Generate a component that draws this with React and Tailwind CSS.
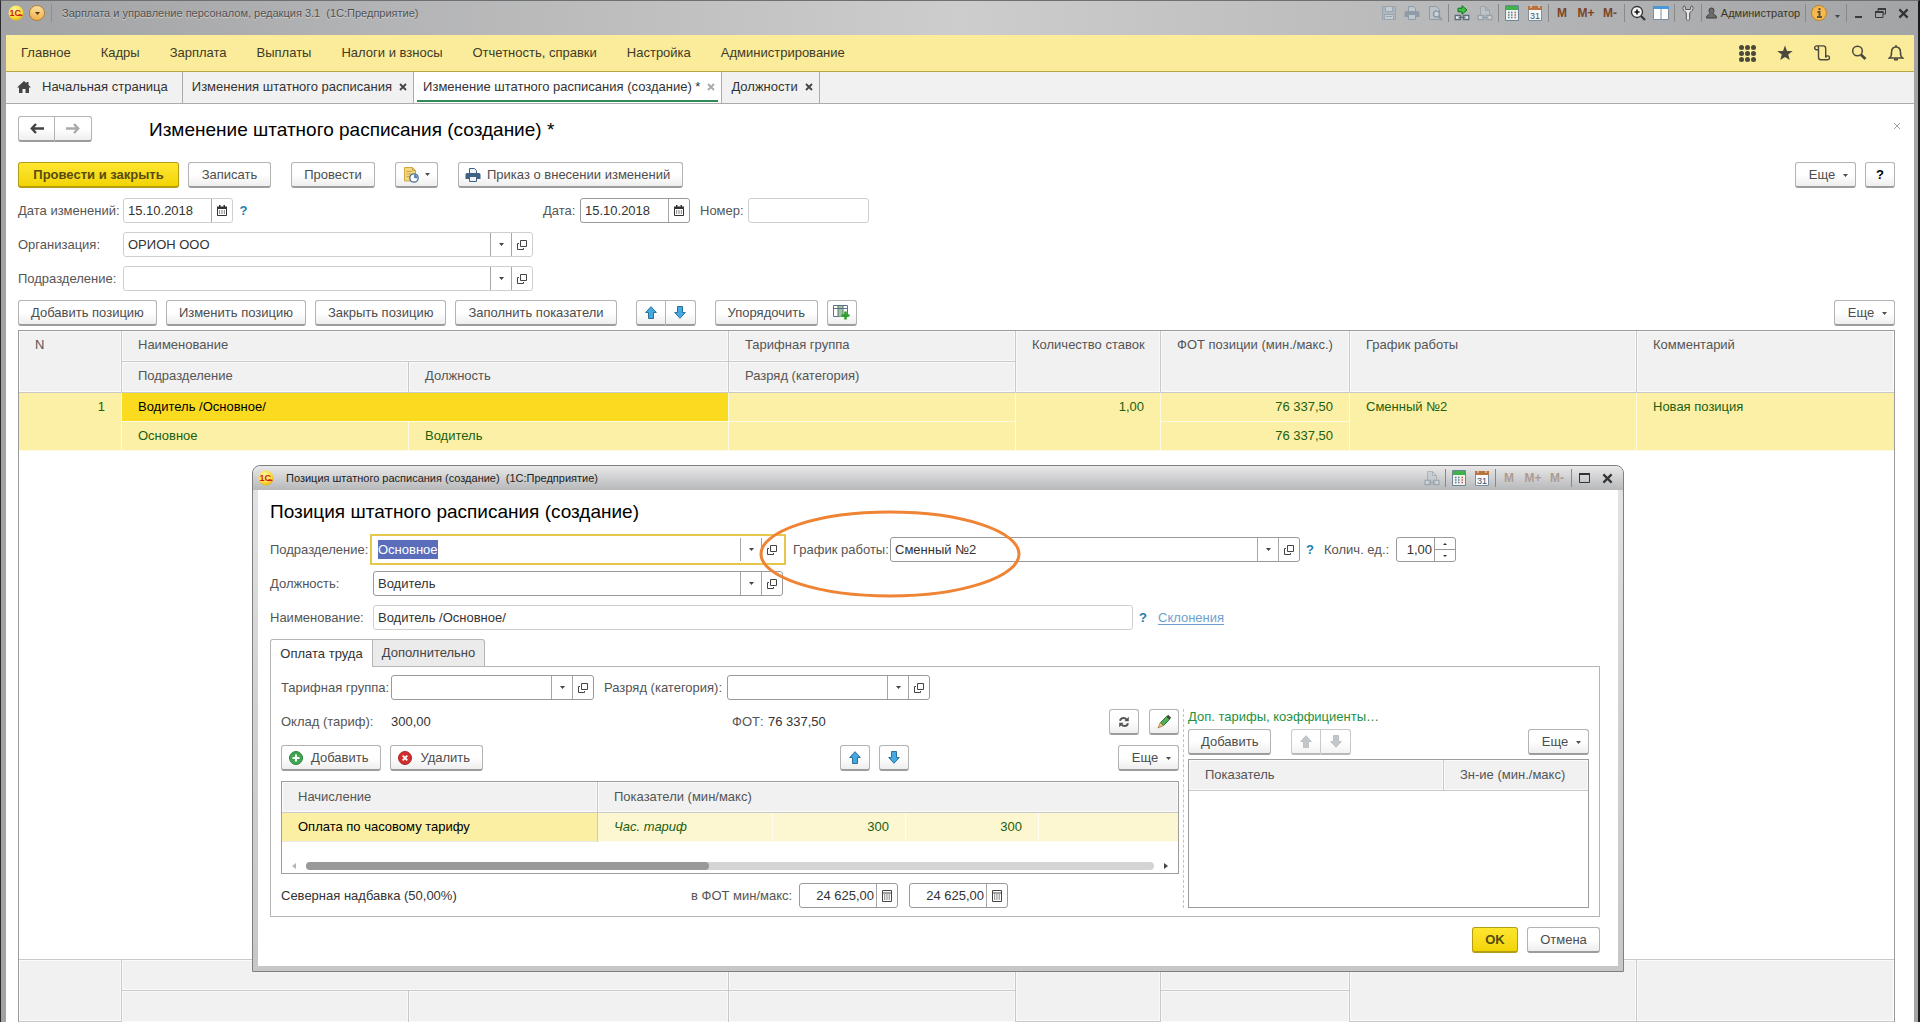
import { useEffect, useRef } from 'react'
import clsx from 'clsx'

const MENU = [
  'Главное',
  'Кадры',
  'Зарплата',
  'Выплаты',
  'Налоги и взносы',
  'Отчетность, справки',
  'Настройка',
  'Администрирование',
]

/* ---------- icons ---------- */

function Logo() {
  return (
    <svg width="16" height="16" viewBox="0 0 16 16" className="shrink-0">
      <defs>
        <radialGradient id="logo" cx="0.4" cy="0.3" r="0.8">
          <stop offset="0" stopColor="#fff7a0" />
          <stop offset="0.6" stopColor="#fbdc3c" />
          <stop offset="1" stopColor="#e0a418" />
        </radialGradient>
      </defs>
      <circle cx="8" cy="8" r="7.5" fill="url(#logo)" />
      <text x="1.500" y="11" fontSize="9" fontWeight="bold" fill="#cc1f1a" fontFamily="Liberation Sans, sans-serif">1С</text>
      <path d="M10 10.300h4.500" stroke="#cc1f1a" strokeWidth="1.300" />
    </svg>
  )
}

function SaveIcon() {
  return (
    <svg width="16" height="16" viewBox="0 0 16 16" fill="none" stroke="#93a2ae" opacity="0.85">
      <path d="M1.500 1.500h13v13h-13z" fill="#aab6bf" />
      <path d="M4.500 1.500h7v5h-7zM3.500 9.500h9v5h-9zM5 11.500h6" fill="#c9cfd4" />
    </svg>
  )
}

function PrintIcon({ className = 'text-[#8f9ba6]', paper = '#c0c6cb' }) {
  return (
    <svg width="16" height="16" viewBox="0 0 16 16" className={className}>
      <path d="M4.500 1.500h5l2 2v3h-7z" fill={paper} stroke="currentColor" />
      <path d="M2 6h12a1.500 1.500 0 0 1 1.500 1.500V12H.5V7.500A1.500 1.500 0 0 1 2 6z" fill="currentColor" />
      <path d="M4.500 9.500h7v5h-7z" fill={paper} stroke="currentColor" />
    </svg>
  )
}

function PreviewIcon() {
  return (
    <svg width="16" height="16" viewBox="0 0 16 16" fill="none" stroke="#8c9aa5">
      <path d="M2.500 1.500h7l3 3v10h-10z" fill="#bcc3c9" />
      <circle cx="9.500" cy="9" r="3" strokeWidth="1.500" fill="#ccd3d8" />
      <path d="m11.500 11.500 3.500 3.500" strokeWidth="2" />
    </svg>
  )
}

function LinkBase({ color }) {
  return (
    <path
      d="M6.500 10.500H1.200v4h5.300zM14.800 10.500H9.500v4h5.300zM4.500 12.500h7"
      fill="#eef1f3"
      stroke={color}
      strokeWidth="1.300"
    />
  )
}

function LinkGoIcon() {
  return (
    <svg width="16" height="16" viewBox="0 0 16 16">
      <LinkBase color="#5d6d79" />
      <path d="M4 3.200h4V.7l5 4.300-5 4.300V6.800H4z" fill="#3cc440" stroke="#12701a" />
    </svg>
  )
}

function LinkDocIcon() {
  return (
    <svg width="16" height="16" viewBox="0 0 16 16" opacity="0.6">
      <path d="M3.500 10V1.500h5l4 4V10M8.500 1.500v4h4" fill="#c4cad0" stroke="#8c9aa6" />
      <LinkBase color="#8494a0" />
    </svg>
  )
}

function CalcIcon() {
  return (
    <svg width="14" height="16" viewBox="0 0 14 16">
      <path d="M.5.5h13v15H.5z" fill="#eef3f2" stroke="#6f8494" />
      <path d="M1 1h12v4H1z" fill="#3fb24c" />
      <path d="M3 7.500h1.500M6 7.500h1.500M3 10h1.500M6 10h1.500M3 12.500h1.500M6 12.500h1.500" stroke="#61798c" strokeWidth="1.500" />
      <path d="M9.500 7.500H11M9.500 10H11M9.500 12.500H11" stroke="#c8564c" strokeWidth="1.500" />
    </svg>
  )
}

function DayIcon() {
  return (
    <svg width="14" height="16" viewBox="0 0 14 16">
      <path d="M.5 1.500h13v14H.5z" fill="#f7f9fb" stroke="#7a8fa3" />
      <path d="M0 1h14v4H0z" fill="#b9733f" />
      <path d="M3 0v3M11 0v3" stroke="#f5e3d3" />
      <text x="7" y="13.500" textAnchor="middle" fontSize="9" fill="#3e5368" fontFamily="Liberation Sans, sans-serif">31</text>
    </svg>
  )
}

function ZoomInIcon() {
  return (
    <svg width="16" height="16" viewBox="0 0 16 16" fill="none" stroke="#333">
      <circle cx="7" cy="7" r="5.500" fill="#f4f4f4" strokeWidth="1.300" />
      <path d="M7 4.500v5M4.500 7h5" stroke="#111" strokeWidth="1.600" />
      <path d="m11 11 4 4" strokeWidth="2.200" />
    </svg>
  )
}

function PanelsIcon() {
  return (
    <svg width="16" height="16" viewBox="0 0 16 16">
      <path d="M.5 1.500h15v13H.5z" fill="#fff" stroke="#7d8c9a" />
      <path d="M0 1h16v3H0z" fill="#4a97dc" />
      <path d="M8 4v10" stroke="#7d8c9a" />
    </svg>
  )
}

function WrenchIcon() {
  return (
    <svg width="16" height="16" viewBox="0 0 16 16">
      <path
        d="M4 .8C2.500 2 2.600 5 4.500 6.300L6.300 7.500v6.300c0 2 3.400 2 3.400 0V7.500l1.800-1.200C13.400 5 13.500 2 12 .8L10.700 1.600v2.900H5.300V1.600z"
        fill="#e6e6e6"
        stroke="#555"
      />
    </svg>
  )
}

function UserIcon() {
  return (
    <svg width="11" height="12" viewBox="0 0 11 12">
      <path d="M3 3.500a2.500 2.500 0 0 1 5 0C8 5 7 6 7 6.500c0 1 3.500 1 3.500 4.500H.5c0-3.500 3.500-3.500 3.500-4.500C4 6 3 5 3 3.500z" fill="#6d6d6d" stroke="#3c3c3c" />
    </svg>
  )
}

function Caret({ className }) {
  return (
    <svg width="5" height="3" viewBox="0 0 5 3" className={clsx('shrink-0', className)}>
      <path d="M0 0h5L2.500 3z" fill="currentColor" />
    </svg>
  )
}

function OpenIcon() {
  return (
    <svg width="10" height="10" viewBox="0 0 10 10" fill="none" stroke="#444" strokeWidth="1">
      <path d="M3.500.5h6v6h-6zM2 3.500H.5v6h6V8" />
    </svg>
  )
}

function CalendarIcon() {
  return (
    <svg width="10" height="11" viewBox="0 0 10 11">
      <path d="M.5 2.500h9v8h-9z" fill="#fff" stroke="#333" />
      <path d="M0 1.500h10v2.500H0zM2 0h1.500v2H2zM6.500 0H8v2H6.500z" fill="#333" />
      <path d="M2 6h6M2 8h6" stroke="#333" strokeDasharray="1.200 1.200" />
    </svg>
  )
}

function KeypadIcon() {
  return (
    <svg width="10" height="12" viewBox="0 0 10 12">
      <path d="M.5.5h9v11h-9zM.5 3h9" fill="#fff" stroke="#444" />
      <path d="M2 5h6M2 7h6M2 9h6" stroke="#444" strokeDasharray="1.300 1" />
    </svg>
  )
}

function UpIcon({ disabled }) {
  return (
    <svg width="12" height="13" viewBox="0 0 12 13">
      <path d="M6 .7 11.300 6.500H8.500v6h-5v-6H.7z" fill={disabled ? '#a9b0b5' : '#45a9e0'} stroke={disabled ? '#a0a6ab' : '#2a6f9c'} />
    </svg>
  )
}

function DownIcon({ disabled }) {
  return (
    <svg width="12" height="13" viewBox="0 0 12 13">
      <path d="M6 12.300.7 6.500h2.800v-6h5v6h2.800z" fill={disabled ? '#a9b0b5' : '#45a9e0'} stroke={disabled ? '#a0a6ab' : '#2a6f9c'} />
    </svg>
  )
}

function ReportIcon() {
  return (
    <svg width="16" height="16" viewBox="0 0 16 16">
      <path d="M1.500.5h8l3 3v10.500h-11z" fill="#f3d77c" stroke="#cfa845" />
      <path d="M9.500.5v3h3M3.500 4.500h5M3.500 7h5M3.500 9.500h3" fill="none" stroke="#c9a24a" />
      <circle cx="11" cy="11" r="4.200" fill="#fff" stroke="#4a6e92" strokeWidth="1.300" />
      <path d="M11 11V7.500a3.500 3.500 0 0 1 3.300 4z" fill="#5b87b5" />
    </svg>
  )
}

function AddColumnIcon() {
  return (
    <svg width="17" height="15" viewBox="0 0 17 15">
      <path d="M.5.5h14v11H.5z" fill="#fff" stroke="#5d7382" />
      <path d="M5 1h5v10.500H5z" fill="#9bc79a" />
      <path d="M1 3.500h13M5 1v11M10 1v11" stroke="#5d7382" />
      <path d="M12.500 6.500v8M8.500 10.500h8" stroke="#2e9f2c" strokeWidth="2.600" />
    </svg>
  )
}

function PlusCircle() {
  return (
    <svg width="14" height="14" viewBox="0 0 14 14">
      <circle cx="7" cy="7" r="6.500" fill="#3fa650" stroke="#2f8540" />
      <path d="M7 3.500v7M3.500 7h7" stroke="#fff" strokeWidth="2" />
    </svg>
  )
}

function CrossCircle() {
  return (
    <svg width="14" height="14" viewBox="0 0 14 14">
      <circle cx="7" cy="7" r="6.500" fill="#cf2f2f" stroke="#a92323" />
      <path d="m4.700 4.700 4.600 4.600M9.300 4.700 4.700 9.300" stroke="#fff" strokeWidth="1.800" />
    </svg>
  )
}

function RefreshIcon() {
  return (
    <svg width="12" height="12" viewBox="0 0 12 12" fill="none" stroke="#555" strokeWidth="2">
      <path d="M2 4.800C2.500 2.800 4 2 5.500 2c1.300 0 2.300.5 3.200 1.600M10 7.200C9.500 9.200 8 10 6.500 10c-1.300 0-2.300-.5-3.200-1.600" />
      <path d="M10.800.8v4.500H6.300zM1.200 11.200V6.700h4.500z" fill="#555" stroke="none" />
    </svg>
  )
}

function PencilIcon() {
  return (
    <svg width="15" height="15" viewBox="0 0 15 15">
      <path d="m3.500 8.500 6-6 3 3-6 6z" fill="#4fae57" stroke="#2f7d38" />
      <path d="m9.500 2.500 1.700-1.700 3 3-1.700 1.700z" fill="#444" />
      <path d="m3.300 8.700 3 3L1 14z" fill="#f0c88a" stroke="#8f6a35" strokeWidth="0.700" />
    </svg>
  )
}

function HomeIcon() {
  return (
    <svg width="14" height="12" viewBox="0 0 14 12">
      <path d="M7 0 0 6.500h2V12h3.500V8h3v4H12V6.500h2L11.500 4V1h-2v1.300z" fill="#444" />
    </svg>
  )
}

function CrossIcon({ size = 8, className, width = 2 }) {
  return (
    <svg width={size} height={size} viewBox="0 0 8 8" className={className}>
      <path d="m1 1 6 6M7 1 1 7" stroke="currentColor" strokeWidth={width} />
    </svg>
  )
}

/* ---------- controls ---------- */

function Btn({ children, className, primary, label, disabled }) {
  return (
    <button
      type="button"
      aria-label={label}
      disabled={disabled}
      className={clsx(
        'flex h-[26px] shrink-0 items-center justify-center rounded-[3px] border border-b-2 whitespace-nowrap',
        primary
          ? 'border-[#b39d12] bg-linear-to-b from-[#ffe72e] to-[#f2d400] font-bold text-[#574c0c]'
          : 'border-[#b3b3b3] border-b-[#9c9c9c] bg-linear-to-b from-white from-50% to-[#eeeeee] text-[#4d4d4d]',
        className,
      )}
    >
      {children}
    </button>
  )
}

function MoreBtn() {
  return (
    <Btn className="w-[61px] gap-2 pl-1.5">
      Еще <Caret className="mt-0.5" />
    </Btn>
  )
}

function MoveButtons({ disabled }) {
  return (
    <div className="flex">
      <Btn label="Вверх" disabled={disabled} className={clsx('w-[30px] rounded-r-none', disabled && 'opacity-70')}>
        <UpIcon disabled={disabled} />
      </Btn>
      <Btn label="Вниз" disabled={disabled} className={clsx('w-[30px] rounded-l-none border-l-0', disabled && 'opacity-70')}>
        <DownIcon disabled={disabled} />
      </Btn>
    </div>
  )
}

const BUTTON_ICONS = {
  list: { label: 'Выбрать', icon: <Caret className="text-[#444]" /> },
  open: { label: 'Открыть', icon: <OpenIcon /> },
  date: { label: 'Календарь', icon: <CalendarIcon /> },
  calc: { label: 'Калькулятор', icon: <KeypadIcon /> },
}

function Field({ id, value = '', buttons = [], light, active, right, className, inputRef }) {
  return (
    <div
      className={clsx(
        'flex h-[25px] border bg-white',
        light && 'rounded-[3px] border-[#cfcfcf]',
        active && 'border-white outline-2 outline-offset-1 outline-[#e6c74b]',
        !light && !active && 'rounded-[3px] border-[#9a9a9a]',
        className,
      )}
    >
      <input
        id={id}
        ref={inputRef}
        defaultValue={value}
        className={clsx(
          'w-full min-w-0 bg-transparent outline-none selection:bg-[#5a6dbb] selection:text-white',
          right ? 'pr-0.5 text-right' : 'px-1',
        )}
      />
      {buttons.map((b) => (
        <button
          key={b}
          type="button"
          aria-label={BUTTON_ICONS[b].label}
          className="flex w-[21px] shrink-0 items-center justify-center border-l border-[#a6a6a6]"
        >
          {BUTTON_ICONS[b].icon}
        </button>
      ))}
    </div>
  )
}

function Label({ htmlFor, children, className }) {
  return (
    <label htmlFor={htmlFor} className={clsx('shrink-0 whitespace-nowrap text-[#555]', className)}>
      {children}
    </label>
  )
}

function Help({ className }) {
  return (
    <button type="button" className={clsx('font-bold text-[#2080ad]', className)}>
      ?
    </button>
  )
}

/* ---------- window chrome ---------- */

function BarIcon({ children, label, className = 'w-[23px]' }) {
  return (
    <button type="button" aria-label={label} className={clsx('flex h-5 shrink-0 items-center justify-center', className)}>
      {children}
    </button>
  )
}

function BarSep() {
  return (
    <span className="flex h-[18px] w-1 shrink-0 justify-center">
      <span className="w-px bg-[#88898b]" />
    </span>
  )
}

function MemoryButtons({ className }) {
  return (
    <div className={clsx('flex text-[12px] font-bold', className)}>
      <BarIcon className="w-6">M</BarIcon>
      <BarIcon className="w-6">M+</BarIcon>
      <BarIcon className="w-6">M-</BarIcon>
    </div>
  )
}

function TitleBar() {
  return (
    <header className="flex h-[34px] shrink-0 items-start pt-0.5 text-[11px]">
      <div className="flex h-5 items-center">
        <span className="flex w-[19px] justify-center">
          <Logo />
        </span>
        <button type="button" aria-label="Меню" className="ml-1 flex size-4 items-center justify-center rounded-full border border-[#b5803a] bg-linear-to-b from-[#fbdf9c] to-[#f0b049] text-[#4b3a1c]">
          <Caret />
        </button>
        <span className="ml-1.5 h-[18px] w-px bg-[#8d8e90]" />
        <span className="ml-2.5 whitespace-pre text-[#505050] text-shadow-[0_1px_1px_#d8d8d8]">
          {'Зарплата и управление персоналом, редакция 3.1  (1С:Предприятие)'}
        </span>
      </div>
      <div className="ml-auto flex items-center">
        <BarIcon label="Сохранить"><SaveIcon /></BarIcon>
        <BarIcon label="Печать"><PrintIcon /></BarIcon>
        <BarIcon label="Просмотр"><PreviewIcon /></BarIcon>
        <BarSep />
        <BarIcon label="Перейти по ссылке"><LinkGoIcon /></BarIcon>
        <BarIcon label="Получить ссылку"><LinkDocIcon /></BarIcon>
        <BarSep />
        <BarIcon label="Калькулятор"><CalcIcon /></BarIcon>
        <BarIcon label="Календарь"><DayIcon /></BarIcon>
        <BarSep />
        <MemoryButtons className="text-[#7b4526]" />
        <BarSep />
        <BarIcon label="Масштаб"><ZoomInIcon /></BarIcon>
        <BarIcon label="Панели"><PanelsIcon /></BarIcon>
        <BarSep />
        <BarIcon label="Настройки"><WrenchIcon /></BarIcon>
        <BarSep />
        <button type="button" className="flex w-[100px] items-center justify-center gap-1 text-[#3c3620]">
          <UserIcon /> Администратор
        </button>
        <BarSep />
        <BarIcon label="О программе">
          <svg width="16" height="16" viewBox="0 0 16 16">
            <circle cx="8" cy="8" r="7.500" fill="#f5b94e" stroke="#b98431" />
            <path d="M8.500 3v2.300M6.500 7h2v5M6 12h5" stroke="#5e5340" strokeWidth="1.900" fill="none" />
          </svg>
        </BarIcon>
        <BarIcon label="Еще" className="w-[14px] pt-1.5"><Caret className="text-[#444]" /></BarIcon>
        <BarSep />
        <BarIcon label="Свернуть" className="w-[21px] pt-2">
          <span className="h-0.5 w-[7px] bg-[#3a3a3a]" />
        </BarIcon>
        <BarIcon label="Восстановить">
          <svg width="11" height="10" viewBox="0 0 11 10" fill="none" stroke="#3a3a3a">
            <path d="M3 3V.5h7.500V6H8M.5 3.500h7.500v6H.5z" />
            <path d="M3 1h8M0 4h8.500" strokeWidth="2" />
          </svg>
        </BarIcon>
        <BarIcon label="Закрыть" className="w-[22px]">
          <CrossIcon size={11} width={1.6} className="text-[#333]" />
        </BarIcon>
      </div>
    </header>
  )
}

function MenuBar() {
  return (
    <nav className="flex h-[37px] shrink-0 items-center border-b border-[#b5a642] bg-[#faec9b] pl-[15px] text-[#3f3b28]">
      <div className="flex gap-[30px]">
        {MENU.map((m) => (
          <button key={m} type="button" className="whitespace-nowrap">
            {m}
          </button>
        ))}
      </div>
      <div className="ml-auto flex text-[#4b493d]">
        <button type="button" aria-label="Функции" className="flex w-[37px] justify-center">
          <svg width="17" height="17" viewBox="0 0 17 17" fill="currentColor">
            {[2.5, 8.5, 14.5].map((y) => [2.5, 8.5, 14.5].map((x) => <circle key={x + '-' + y} cx={x} cy={y} r="2.500" />))}
          </svg>
        </button>
        <button type="button" aria-label="Избранное" className="flex w-[37px] justify-center">
          <svg width="16" height="16" viewBox="0 0 16 16" fill="currentColor">
            <path d="m8 .5 2 5.400 5.700.2-4.500 3.500 1.600 5.500L8 11.900l-4.800 3.200 1.600-5.500L.3 6.100 6 5.900z" />
          </svg>
        </button>
        <button type="button" aria-label="История" className="flex w-[37px] justify-center">
          <svg width="16" height="16" viewBox="0 0 16 16" fill="none" stroke="currentColor" strokeWidth="1.400">
            <path d="M4.500 4.700H2.600a1.900 1.900 0 1 1 1.900-1.900v9.400c0 1.500 1 2.500 2.400 2.500h6.700a1.900 1.900 0 1 0-1.900-1.900V3.500c0-1.700-.9-2.600-2.500-2.600H2.600" />
          </svg>
        </button>
        <button type="button" aria-label="Поиск" className="flex w-[37px] justify-center">
          <svg width="16" height="16" viewBox="0 0 16 16" fill="none" stroke="currentColor">
            <circle cx="6.500" cy="6" r="4.800" strokeWidth="1.500" />
            <path d="m10 9.800 4.500 4.200" strokeWidth="2.800" />
          </svg>
        </button>
        <button type="button" aria-label="Оповещения" className="flex w-[37px] justify-center">
          <svg width="16" height="16" viewBox="0 0 16 16" fill="none" stroke="currentColor" strokeWidth="1.500">
            <path d="M1.500 13c2-1.300 2-2.500 2-5.500C3.500 4 5.500 2 8 2s4.500 2 4.500 5.500c0 3 0 4.200 2 5.500zM8 0v2" />
            <path d="M6 14.500h4" strokeWidth="2" />
          </svg>
        </button>
      </div>
    </nav>
  )
}

function Tab({ children, active, dim }) {
  return (
    <div className={clsx('flex items-center border-r border-[#ababab] px-[3px]', active ? 'bg-white' : 'bg-[#f1f1f1]')}>
      <div className={clsx('my-px flex flex-1 items-center self-stretch border-b-2', active ? 'border-[#2f8a56]' : 'border-transparent')}>
        <button type="button" className="pr-[7px] pl-1.5 whitespace-nowrap">
          {children}
        </button>
        <button type="button" aria-label="Закрыть вкладку" className="pr-[3px]">
          <CrossIcon className={dim ? 'text-[#a8a8a8]' : 'text-[#444]'} width={1.8} />
        </button>
      </div>
    </div>
  )
}

function Tabs() {
  return (
    <div className="flex h-8 shrink-0 border-b border-[#ababab] bg-[#f1f1f1] text-[#333]">
      <button type="button" className="flex items-center gap-[11px] border-r border-[#ababab] pr-3.5 pb-0.5 pl-[11px] whitespace-nowrap">
        <HomeIcon /> Начальная страница
      </button>
      <Tab>Изменения штатного расписания</Tab>
      <Tab active dim>Изменение штатного расписания (создание) *</Tab>
      <Tab>Должности</Tab>
    </div>
  )
}

/* ---------- staff table ---------- */

function Columns() {
  return (
    <colgroup>
      <col className="w-[103px]" />
      <col className="w-[287px]" />
      <col className="w-[320px]" />
      <col className="w-[287px]" />
      <col className="w-[145px]" />
      <col className="w-[189px]" />
      <col className="w-[287px]" />
      <col />
    </colgroup>
  )
}

const TH = 'border-r border-b border-[#c9c9c9] bg-[#f1f1f1] px-4 pt-1.5 text-left align-top font-normal leading-4 shadow-[inset_0_0_0_1px_#fafafa]'
const TD = 'border-r border-b border-[#fffbe0] bg-[#fbf0a6] px-4 pt-1.5 align-top leading-4'

function StaffTable() {
  return (
    <div className="mt-1 flex min-h-0 flex-1 flex-col justify-between border border-b-0 border-[#9c9c9c]">
      <table className="w-full table-fixed border-separate border-spacing-0 text-[#555]">
        <Columns />
        <thead>
          <tr className="h-[31px]">
            <th rowSpan={2} className={TH}>N</th>
            <th colSpan={2} className={TH}>Наименование</th>
            <th className={TH}>Тарифная группа</th>
            <th rowSpan={2} className={clsx(TH, 'whitespace-nowrap')}>Количество ставок</th>
            <th rowSpan={2} className={clsx(TH, 'whitespace-nowrap')}>ФОТ позиции (мин./макс.)</th>
            <th rowSpan={2} className={TH}>График работы</th>
            <th rowSpan={2} className={clsx(TH, 'border-r-0')}>Комментарий</th>
          </tr>
          <tr className="h-[31px]">
            <th className={TH}>Подразделение</th>
            <th className={TH}>Должность</th>
            <th className={TH}>Разряд (категория)</th>
          </tr>
        </thead>
        <tbody className="text-[#1c6010]">
          <tr className="h-[29px]">
            <td rowSpan={2} className={clsx(TD, 'text-right')}>1</td>
            <td colSpan={2} className="border-r border-b border-[#fffbe0] bg-[#fadb20] px-4 pt-1.5 align-top leading-4 text-black">
              Водитель /Основное/
            </td>
            <td className={TD} />
            <td rowSpan={2} className={clsx(TD, 'text-right')}>1,00</td>
            <td className={clsx(TD, 'text-right')}>76 337,50</td>
            <td rowSpan={2} className={TD}>Сменный №2</td>
            <td rowSpan={2} className={clsx(TD, 'border-r-0')}>Новая позиция</td>
          </tr>
          <tr className="h-[29px]">
            <td className={TD}>Основное</td>
            <td className={TD}>Водитель</td>
            <td className={TD} />
            <td className={clsx(TD, 'text-right')}>76 337,50</td>
          </tr>
        </tbody>
      </table>
      <table className="w-full table-fixed border-separate border-spacing-0 border-t border-[#c9c9c9]">
        <Columns />
        <tbody>
          <tr className="h-[31px]">
            <td rowSpan={2} className={TH} />
            <td colSpan={2} className={TH} />
            <td className={TH} />
            <td rowSpan={2} className={TH} />
            <td className={TH} />
            <td rowSpan={2} className={TH} />
            <td rowSpan={2} className={clsx(TH, 'border-r-0')} />
          </tr>
          <tr className="h-[31px]">
            <td className={clsx(TH, 'border-b-0')} />
            <td className={clsx(TH, 'border-b-0')} />
            <td className={clsx(TH, 'border-b-0')} />
            <td className={clsx(TH, 'border-b-0')} />
          </tr>
        </tbody>
      </table>
    </div>
  )
}

function DocumentForm() {
  return (
    <main className="flex min-h-0 flex-1 flex-col bg-white pt-3 pr-[19px] pl-3">
      <div className="flex items-start">
        <div className="flex">
          <Btn label="Назад" className="w-[37px] rounded-r-none">
            <svg width="14" height="11" viewBox="0 0 14 11" fill="none" stroke="#444" strokeWidth="2.400">
              <path d="M14 5.500H2M6 1 1.800 5.500 6 10" />
            </svg>
          </Btn>
          <Btn label="Вперед" className="w-[37px] rounded-l-none border-l-0">
            <svg width="14" height="11" viewBox="0 0 14 11" fill="none" stroke="#aaa" strokeWidth="2.400">
              <path d="M0 5.500h12M8 1l4.200 4.500L8 10" />
            </svg>
          </Btn>
        </div>
        <h1 className="ml-[57px] text-[19px] leading-7 text-black">Изменение штатного расписания (создание) *</h1>
        <button type="button" aria-label="Закрыть" className="mt-1 -mr-2 ml-auto p-0.5">
          <CrossIcon width={0.9} className="text-[#999]" />
        </button>
      </div>

      <div className="mt-[18px] flex">
        <Btn primary className="w-[161px]">Провести и закрыть</Btn>
        <Btn className="ml-[9px] w-[83px]">Записать</Btn>
        <Btn className="ml-5 w-[84px]">Провести</Btn>
        <Btn label="Создать на основании" className="ml-5 w-[43px] gap-1.5">
          <ReportIcon />
          <Caret />
        </Btn>
        <Btn className="ml-5 gap-1.5 pr-3 pl-1.5">
          <PrintIcon className="text-[#3f6184]" paper="#eef3f8" /> Приказ о внесении изменений
        </Btn>
        <div className="ml-auto flex gap-[9px]">
          <MoreBtn />
          <Btn className="w-[30px] font-bold text-black">?</Btn>
        </div>
      </div>

      <div className="mt-2.5 flex items-center">
        <Label htmlFor="changeDate" className="w-[105px]">Дата изменений:</Label>
        <Field id="changeDate" value="15.10.2018" buttons={['date']} light className="w-[110px]" />
        <Help className="w-[21px]" />
        <Label htmlFor="docDate" className="ml-[289px] w-[37px]">Дата:</Label>
        <Field id="docDate" value="15.10.2018" buttons={['date']} className="w-[110px]" />
        <Label htmlFor="docNumber" className="ml-2.5 w-12">Номер:</Label>
        <Field id="docNumber" light className="w-[121px]" />
      </div>
      <div className="mt-[9px] flex items-center">
        <Label htmlFor="org" className="w-[105px]">Организация:</Label>
        <Field id="org" value="ОРИОН ООО" buttons={['list', 'open']} light className="w-[410px]" />
      </div>
      <div className="mt-[9px] flex items-center">
        <Label htmlFor="dept" className="w-[105px]">Подразделение:</Label>
        <Field id="dept" buttons={['list', 'open']} light className="w-[410px]" />
      </div>

      <div className="mt-[9px] flex gap-[9px]">
        <Btn className="px-3">Добавить позицию</Btn>
        <Btn className="px-3">Изменить позицию</Btn>
        <Btn className="px-3">Закрыть позицию</Btn>
        <Btn className="px-3">Заполнить показатели</Btn>
        <div className="mx-2.5">
          <MoveButtons />
        </div>
        <Btn className="px-3">Упорядочить</Btn>
        <Btn label="Добавить колонку" className="w-[30px]">
          <AddColumnIcon />
        </Btn>
        <div className="ml-auto">
          <MoreBtn />
        </div>
      </div>

      <StaffTable />
    </main>
  )
}

/* ---------- position dialog ---------- */

function Spinner() {
  return (
    <div className="flex h-[25px] w-[60px] rounded-[3px] border border-[#9a9a9a]">
      <input id="count" defaultValue="1,00" className="w-full min-w-0 pr-0.5 text-right outline-none" />
      <div className="flex w-[21px] shrink-0 flex-col border-l border-[#9a9a9a]">
        <button type="button" aria-label="Больше" className="flex flex-1 items-center justify-center border-b border-[#9a9a9a]">
          <svg width="4" height="2" viewBox="0 0 4 2"><path d="M2 0l2 2H0z" fill="#333" /></svg>
        </button>
        <button type="button" aria-label="Меньше" className="flex flex-1 items-center justify-center">
          <svg width="4" height="2" viewBox="0 0 4 2"><path d="M0 0h4L2 2z" fill="#333" /></svg>
        </button>
      </div>
    </div>
  )
}

function AccrualTable() {
  const th = 'h-[31px] border-b border-[#c9c9c9] bg-[#f1f1f1] px-4 text-left font-normal shadow-[inset_0_0_0_1px_#fafafa]'
  const td = 'h-[29px] border-b border-r border-[#fffdf0] bg-[#fdf7d1] px-4'
  return (
    <div className="mt-2.5 border border-[#9c9c9c]">
      <table className="w-full table-fixed border-separate border-spacing-0 text-[#555]">
        <colgroup>
          <col className="w-[316px]" />
          <col className="w-[175px]" />
          <col className="w-[133px]" />
          <col className="w-[133px]" />
          <col />
        </colgroup>
        <thead>
          <tr>
            <th className={clsx(th, 'border-r')}>Начисление</th>
            <th colSpan={4} className={th}>Показатели (мин/макс)</th>
          </tr>
        </thead>
        <tbody className="text-[#1c6010]">
          <tr>
            <td className="h-[29px] border-r border-b border-r-[#c9c9c9] border-b-[#e8e8e8] bg-[#fbefa4] px-4 text-black">
              Оплата по часовому тарифу
            </td>
            <td className={clsx(td, 'italic')}>Час. тариф</td>
            <td className={clsx(td, 'text-right')}>300</td>
            <td className={clsx(td, 'text-right')}>300</td>
            <td className={clsx(td, 'border-r-0')} />
          </tr>
        </tbody>
      </table>
      <div className="mt-5 mb-[3px] flex h-2 items-center gap-2.5 px-2.5">
        <svg width="4" height="6" viewBox="0 0 4 6"><path d="M4 0v6L0 3z" fill="#b5b5b5" /></svg>
        <div className="h-2 flex-1 rounded-full bg-[#d4d4d4]">
          <div className="h-2 w-[47.500%] rounded-full bg-[#999]" />
        </div>
        <svg width="4" height="6" viewBox="0 0 4 6"><path d="M0 0v6l4-3z" fill="#444" /></svg>
      </div>
    </div>
  )
}

function PayPanel() {
  return (
    <div className="-mt-px border border-[#b5b5b5] px-2.5 pt-2 pb-2">
      <div className="flex items-center">
        <Label htmlFor="tariffGroup" className="w-[110px]">Тарифная группа:</Label>
        <Field id="tariffGroup" buttons={['list', 'open']} className="w-[203px]" />
        <Label htmlFor="grade" className="ml-2.5 w-[123px]">Разряд (категория):</Label>
        <Field id="grade" buttons={['list', 'open']} className="w-[203px]" />
      </div>

      <div className="mt-[9px] flex">
        <div className="min-w-0 flex-1">
          <div className="flex items-center">
            <span className="w-[110px] text-[#555]">Оклад (тариф):</span>
            <span className="w-[341px] text-[#333]">300,00</span>
            <span className="w-9 text-[#555]">ФОТ:</span>
            <span className="text-[#333]">76 337,50</span>
            <div className="ml-auto flex gap-2.5">
              <Btn label="Обновить" className="w-[30px]"><RefreshIcon /></Btn>
              <Btn label="Изменить" className="w-[30px]"><PencilIcon /></Btn>
            </div>
          </div>
          <div className="mt-2.5 flex gap-[9px]">
            <Btn className="gap-2 pr-3 pl-[7px]"><PlusCircle /> Добавить</Btn>
            <Btn className="gap-2 pr-3 pl-[7px]"><CrossCircle /> Удалить</Btn>
            <Btn label="Вверх" className="ml-[348px] w-[30px]"><UpIcon /></Btn>
            <Btn label="Вниз" className="w-[30px]"><DownIcon /></Btn>
            <div className="ml-auto">
              <MoreBtn />
            </div>
          </div>
          <AccrualTable />
          <div className="mt-[9px] flex items-center">
            <span className="w-[410px] text-[#333]">Северная надбавка (50,00%)</span>
            <Label htmlFor="fotMin" className="w-[108px]">в ФОТ мин/макс:</Label>
            <Field id="fotMin" value="24 625,00" buttons={['calc']} right className="w-[99px]" />
            <Field id="fotMax" value="24 625,00" buttons={['calc']} right className="ml-[11px] w-[99px]" />
          </div>
        </div>

        <div className="mx-1 w-px border-l border-dashed border-[#c4c4c4]" />

        <div className="flex w-[401px] flex-col">
          <div className="leading-4 text-[#1d9140]">Доп. тарифы, коэффициенты…</div>
          <div className="mt-1 flex">
            <Btn className="px-3">Добавить</Btn>
            <div className="ml-5">
              <MoveButtons disabled />
            </div>
            <div className="ml-auto">
              <MoreBtn />
            </div>
          </div>
          <div className="mt-1 flex-1 border border-[#9c9c9c]">
            <table className="w-full table-fixed border-separate border-spacing-0 text-[#555]">
              <thead>
                <tr>
                  <th className="h-[31px] border-r border-b border-[#c9c9c9] bg-[#f1f1f1] px-4 text-left font-normal shadow-[inset_0_0_0_1px_#fafafa]">Показатель</th>
                  <th className="h-[31px] w-36 border-b border-[#c9c9c9] bg-[#f1f1f1] px-4 text-left font-normal whitespace-nowrap shadow-[inset_0_0_0_1px_#fafafa]">Зн-ие (мин./макс)</th>
                </tr>
              </thead>
            </table>
          </div>
        </div>
      </div>
    </div>
  )
}

function PositionDialog() {
  const deptRef = useRef(null)

  useEffect(() => {
    deptRef.current.focus({ preventScroll: true })
    deptRef.current.select()
  }, [])

  return (
    <section
      role="dialog"
      aria-label="Позиция штатного расписания"
      className="absolute top-[464px] left-[251px] w-[1372px] rounded-t-lg border border-[#7f8082] bg-linear-to-b from-[#e4e4e5] via-[#cfd0d1] to-[#c6c7c9] px-[5px] pb-[5px]"
    >
      <div className="-mx-[5px] flex h-6 items-center rounded-t-lg bg-linear-to-b from-[#e9e9ea] to-[#b7b8ba] pr-1 pl-[5px] text-[11px]">
        <Logo />
        <span className="ml-3 whitespace-pre text-[#222]">{'Позиция штатного расписания (создание)  (1С:Предприятие)'}</span>
        <div className="ml-auto flex items-center">
          <BarIcon label="Получить ссылку"><LinkDocIcon /></BarIcon>
          <BarSep />
          <BarIcon label="Калькулятор"><CalcIcon /></BarIcon>
          <BarIcon label="Календарь"><DayIcon /></BarIcon>
          <BarSep />
          <MemoryButtons className="text-[#ad9c92]" />
          <BarSep />
          <BarIcon label="Развернуть">
            <svg width="11" height="10" viewBox="0 0 11 10" fill="none" stroke="#333">
              <path d="M.5.5h10v9H.5z" />
              <path d="M0 1h11" strokeWidth="2" />
            </svg>
          </BarIcon>
          <BarIcon label="Закрыть">
            <CrossIcon size={11} width={1.6} className="text-[#333]" />
          </BarIcon>
        </div>
      </div>

      <div className="bg-white px-3 pt-2 pb-[13px]">
        <div className="pr-1.5">
          <h2 className="text-[19px] leading-7 text-black">Позиция штатного расписания (создание)</h2>
          <div className="mt-[11px] flex items-center">
            <Label htmlFor="posDept" className="w-[103px]">Подразделение:</Label>
            <Field id="posDept" value="Основное" buttons={['list', 'open']} active inputRef={deptRef} className="w-[410px]" />
            <Label htmlFor="schedule" className="ml-2.5 w-[97px]">График работы:</Label>
            <Field id="schedule" value="Сменный №2" buttons={['list', 'open']} className="w-[410px]" />
            <Help className="w-5" />
            <Label htmlFor="count" className="ml-1 w-[72px]">Колич. ед.:</Label>
            <Spinner />
          </div>
          <div className="mt-[9px] flex items-center">
            <Label htmlFor="post" className="w-[103px]">Должность:</Label>
            <Field id="post" value="Водитель" buttons={['list', 'open']} className="w-[410px]" />
          </div>
          <div className="mt-[9px] flex items-center">
            <Label htmlFor="posName" className="w-[103px]">Наименование:</Label>
            <Field id="posName" value="Водитель /Основное/" light className="w-[760px]" />
            <Help className="w-5" />
            <a href="#cases" className="ml-[5px] text-[#6f9fce] underline underline-offset-2">Склонения</a>
          </div>

          <div className="mt-[9px] flex" role="tablist">
            <button type="button" role="tab" aria-selected="true" className="relative h-7 w-[103px] rounded-tl-[3px] border border-b-0 border-[#b5b5b5] bg-white text-[#333]">
              Оплата труда
            </button>
            <button type="button" role="tab" aria-selected="false" className="h-7 w-28 rounded-tr-[3px] border border-l-0 border-[#b5b5b5] bg-[#ebebeb] text-[#444]">
              Дополнительно
            </button>
          </div>
          <PayPanel />

          <div className="mt-2.5 flex justify-end gap-[9px]">
            <Btn primary className="w-[46px]">OK</Btn>
            <Btn className="w-[73px]">Отмена</Btn>
          </div>
        </div>
      </div>

      {/* marker round the work schedule */}
      <svg width="262" height="88" viewBox="0 0 262 88" className="pointer-events-none absolute top-11 left-[506px]">
        <ellipse cx="131" cy="44" rx="129" ry="42" fill="none" stroke="#ee8434" strokeWidth="3" />
      </svg>
    </section>
  )
}

export default function App() {
  return (
    <div className="relative flex h-screen flex-col overflow-hidden border-t border-r-2 border-l border-t-[#6f7072] border-r-[#1b1b1d] border-l-[#2a2a2c] bg-linear-to-r from-[#a2a3a5] via-[#cdcdcd] to-[#a3a4a6] pr-1 pl-[5px] font-['Liberation_Sans',Arial,sans-serif] text-[13px] text-[#333]">
      <TitleBar />
      <MenuBar />
      <Tabs />
      <DocumentForm />
      <PositionDialog />
    </div>
  )
}
